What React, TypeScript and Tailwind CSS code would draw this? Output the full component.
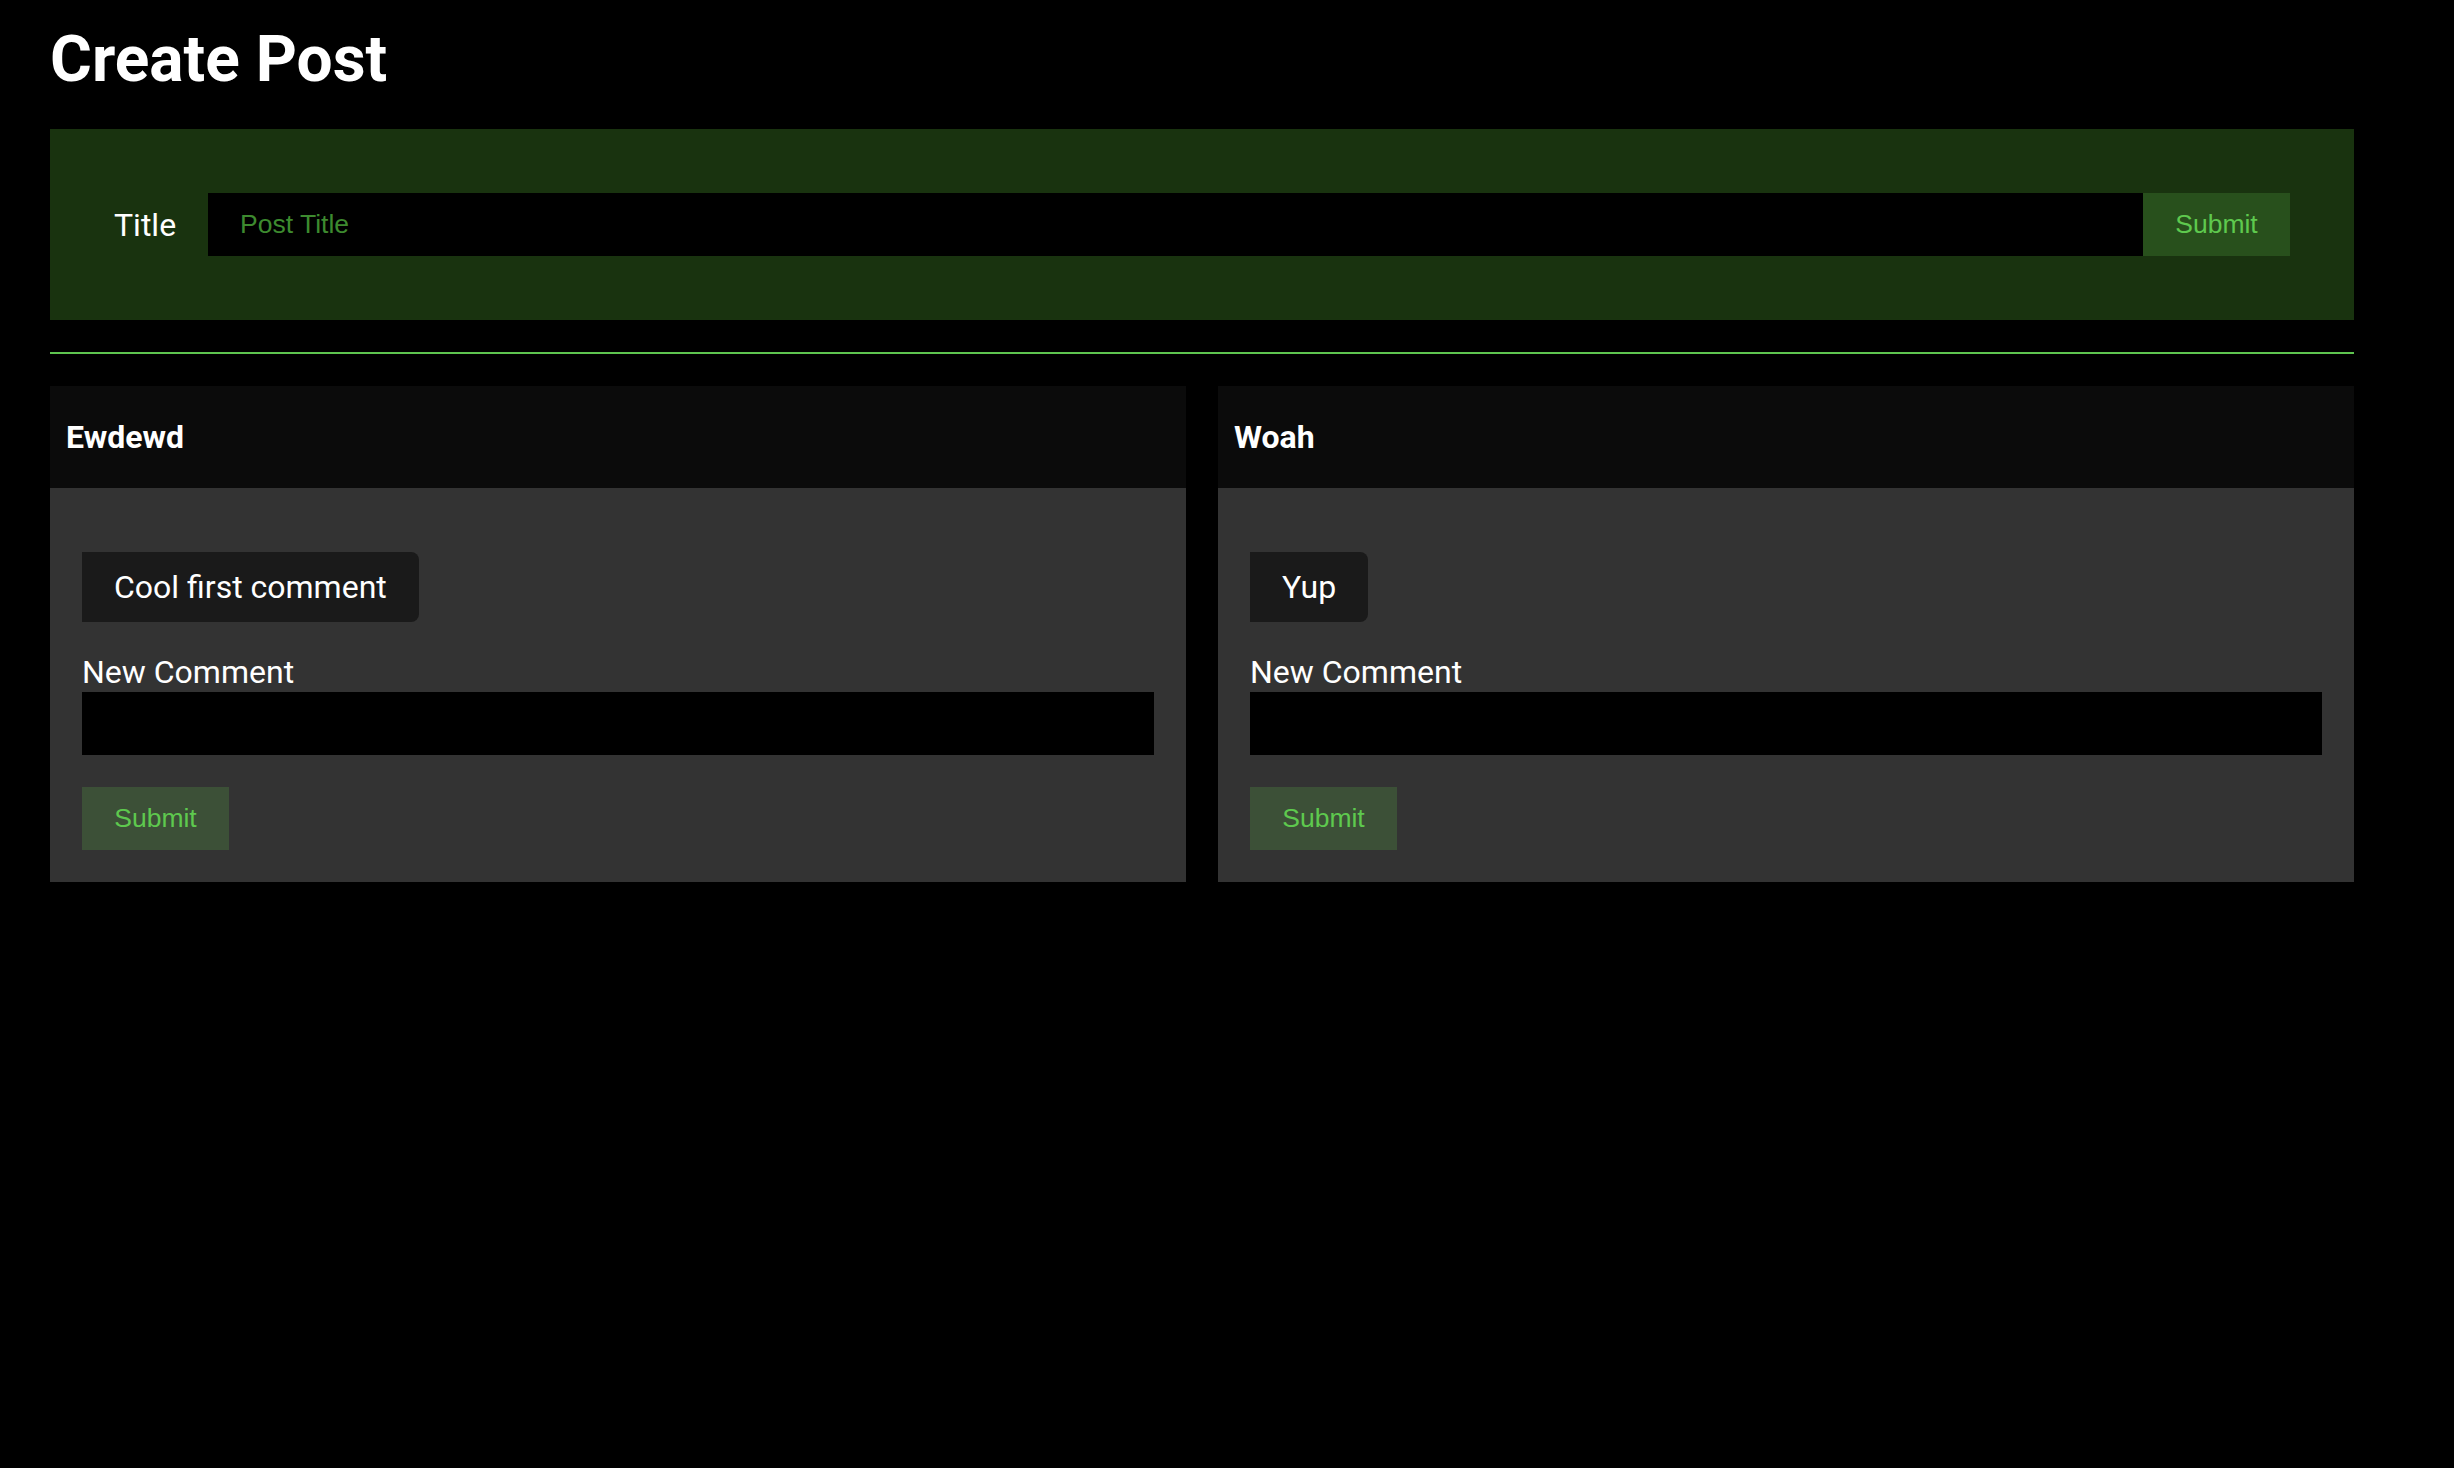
import React from "react";

function PostCard({ title, comment }: { title: string; comment: string }) {
  return (
    <div className="flex flex-col">
      <div className="h-[102px] flex items-center px-[16px] bg-[#0b0b0b] font-['Roboto',sans-serif]">
        <span className="text-[32px] font-bold text-white leading-[38px]">{title}</span>
      </div>
      <div className="bg-[#333333] p-[32px] flex flex-col">
        <div className="mt-[32px] h-[70px] w-fit flex items-center px-[32px] bg-[#1a1a1a] rounded-r-[8px] font-['Roboto',sans-serif] text-[32px] text-white leading-[36px]">
          {comment}
        </div>
        <label className="mt-[32px] font-['Roboto',sans-serif] text-[32px] leading-[36px] text-white">
          New Comment
        </label>
        <input
          className="mt-[2px] h-[63px] w-full bg-black px-[32px] text-[26.5px] text-white outline-none font-['Liberation_Sans',Arial,sans-serif]"
          type="text"
        />
        <button className="mt-[32px] h-[63px] w-[147px] bg-[#3c5037] text-[#5ec94e] text-[26.5px] font-['Liberation_Sans',Arial,sans-serif] flex items-center justify-center">
          Submit
        </button>
      </div>
    </div>
  );
}

export default function App() {
  return (
    <div className="min-h-[1468px] w-full bg-black">
      <div className="pl-[50px] pt-[22px] w-[2354px]">
        <h1 className="text-[64px] font-bold leading-[75px] text-white font-['Roboto',sans-serif]">
          Create Post
        </h1>
        <div className="mt-[32px] bg-[#19330f] p-[64px] flex items-center">
          <label className="font-['Roboto',sans-serif] text-[32px] leading-[36px] text-white mr-[32px]">
            Title
          </label>
          <input
            className="flex-1 h-[63px] bg-black px-[32px] text-[26.5px] text-white placeholder:text-[#3d8a2f] outline-none font-['Liberation_Sans',Arial,sans-serif]"
            placeholder="Post Title"
            type="text"
          />
          <button className="h-[63px] w-[147px] bg-[#28501c] text-[#5ec94e] text-[26.5px] font-['Liberation_Sans',Arial,sans-serif] flex items-center justify-center">
            Submit
          </button>
        </div>
        <div className="mt-[32px] h-[2px] bg-[#5ec44f]" />
        <div className="mt-[32px] grid grid-cols-2 gap-[32px] items-start">
          <PostCard title="Ewdewd" comment="Cool first comment" />
          <PostCard title="Woah" comment="Yup" />
        </div>
      </div>
    </div>
  );
}
